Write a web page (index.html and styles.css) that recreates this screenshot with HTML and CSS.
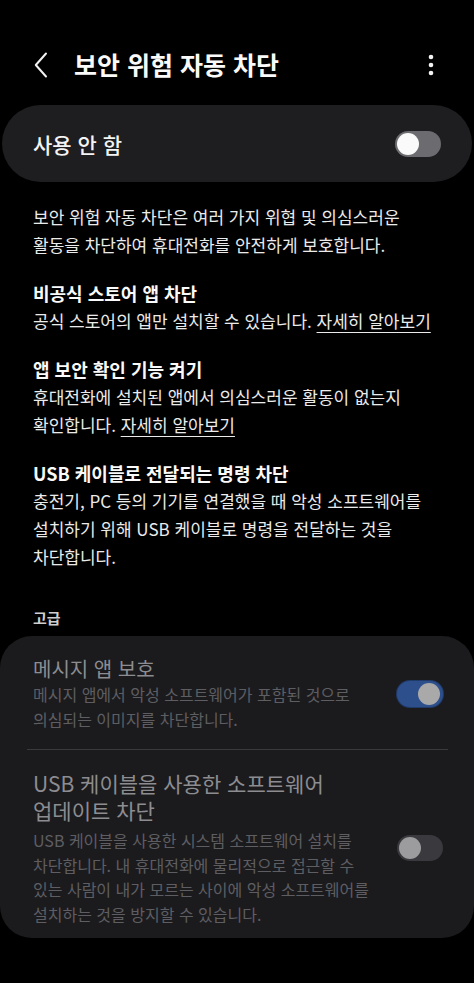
FILE: index.html
```html
<!DOCTYPE html>
<html lang="ko">
<head>
    <meta charset="UTF-8">
    <meta name="viewport" content="width=device-width, initial-scale=1.0">
    <title>보안 위험 자동 차단</title>
    <link rel="stylesheet" href="styles.css">
</head>
<body>
    <div class="screen">
        <header class="app-bar">
            <svg class="back" width="14" height="26" viewBox="0 0 14 26">
                <path d="M12 1.5 L1.8 13 L12 24.5" fill="none" stroke="#f2f2f2" stroke-width="2" stroke-linecap="round" stroke-linejoin="round"/>
            </svg>
            <h1>보안 위험 자동 차단</h1>
            <svg class="more" width="6" height="22" viewBox="0 0 6 22">
                <circle cx="3" cy="3" r="2.3" fill="#f2f2f2"/>
                <circle cx="3" cy="11" r="2.3" fill="#f2f2f2"/>
                <circle cx="3" cy="19" r="2.3" fill="#f2f2f2"/>
            </svg>
        </header>

        <div class="master-switch">
            <span>사용 안 함</span>
            <div class="switch"><div class="knob"></div></div>
        </div>

        <div class="info">
            <p class="lead">보안 위험 자동 차단은 여러 가지 위협 및 의심스러운<br>활동을 차단하여 휴대전화를 안전하게 보호합니다.</p>

            <div class="block">
                <h2>비공식 스토어 앱 차단</h2>
                <p>공식 스토어의 앱만 설치할 수 있습니다. <a href="#">자세히 알아보기</a></p>
            </div>

            <div class="block">
                <h2>앱 보안 확인 기능 켜기</h2>
                <p>휴대전화에 설치된 앱에서 의심스러운 활동이 없는지<br>확인합니다. <a href="#">자세히 알아보기</a></p>
            </div>

            <div class="block">
                <h2>USB 케이블로 전달되는 명령 차단</h2>
                <p>충전기, PC 등의 기기를 연결했을 때 악성 소프트웨어를<br>설치하기 위해 USB 케이블로 명령을 전달하는 것을<br>차단합니다.</p>
            </div>
        </div>

        <div class="section-title">고급</div>

        <div class="card">
            <div class="row">
                <div class="row-text">
                    <div class="row-title">메시지 앱 보호</div>
                    <div class="row-sub">메시지 앱에서 악성 소프트웨어가 포함된 것으로<br>의심되는 이미지를 차단합니다.</div>
                </div>
                <div class="switch on"><div class="knob"></div></div>
            </div>
            <div class="divider"></div>
            <div class="row last">
                <div class="row-text">
                    <div class="row-title">USB 케이블을 사용한 소프트웨어<br>업데이트 차단</div>
                    <div class="row-sub">USB 케이블을 사용한 시스템 소프트웨어 설치를<br>차단합니다. 내 휴대전화에 물리적으로 접근할 수<br>있는 사람이 내가 모르는 사이에 악성 소프트웨어를<br>설치하는 것을 방지할 수 있습니다.</div>
                </div>
                <div class="switch dim"><div class="knob"></div></div>
            </div>
        </div>
    </div>
</body>
</html>
```

FILE: styles.css
```css
body {
    margin: 0;
    background: #000;
    font-family: "Noto Sans CJK KR", "Noto Sans", sans-serif;
    color: #f2f2f2;
}
.screen {
    width: 474px;
    min-height: 983px;
    padding-bottom: 20px;
}
.app-bar {
    display: flex;
    align-items: center;
    height: 32px;
    padding: 48px 0 0 34px;
}
.back {
    margin-top: 1px;
}
.app-bar h1 {
    flex: 1;
    margin: 0 0 0 26px;
    font-size: 25px;
    font-weight: 700;
    line-height: 32px;
    color: #fafafa;
}
.more {
    margin-right: 40px;
    margin-top: 2px;
}
.master-switch {
    display: flex;
    align-items: center;
    justify-content: space-between;
    height: 77px;
    margin: 25px 2px 0 2px;
    padding: 0 31px 0 31px;
    background: #1e1e21;
    border-radius: 39px;
}
.master-switch span {
    font-size: 21px;
    font-weight: 500;
    color: #f4f4f4;
}
.switch {
    position: relative;
    width: 46px;
    height: 26px;
    border-radius: 13px;
    background: #6c6b70;
    flex-shrink: 0;
}
.knob {
    position: absolute;
    left: 2px;
    top: 2px;
    width: 22px;
    height: 22px;
    border-radius: 50%;
    background: #fafafa;
}
.switch.on {
    background: #2d4f8c;
    box-shadow: 0 0 0 1px #203a6a;
}
.switch.on .knob {
    left: auto;
    right: 3px;
    background: #a9a9a9;
}
.switch.dim {
    background: #3a3a3e;
}
.switch.dim .knob {
    background: #9c9c9e;
}
.info {
    padding: 21px 33px 0 33px;
}
.info p {
    margin: 0;
    font-size: 17px;
    line-height: 28px;
    color: #ebebeb;
    white-space: nowrap;
}
.info a {
    color: #ebebeb;
    text-decoration: underline;
    text-underline-offset: 4px;
}
.block {
    margin-top: 20px;
}
.block h2 {
    margin: 0;
    font-size: 18px;
    font-weight: 700;
    line-height: 28px;
    color: #fafafa;
}
.section-title {
    margin: 37px 0 0 33px;
    font-size: 15px;
    font-weight: 700;
    line-height: 20px;
    color: #cfcfcf;
}
.card {
    margin: 8px 0 0 0;
    background: #1b1b1e;
    border-radius: 32px;
    padding: 20px 0 12px 0;
}
.row {
    display: flex;
    align-items: center;
    justify-content: space-between;
    padding: 0 31px 0 33px;
}
.row-text {
    white-space: nowrap;
}
.row-title {
    font-size: 20px;
    line-height: 26px;
    color: #8d8d91;
}
.last .row-title {
    font-size: 21px;
    line-height: 27px;
}
.row-sub {
    font-size: 16px;
    line-height: 24.5px;
    color: #5e5e62;
}
.last .row-sub {
    margin-top: 4px;
}
.divider {
    height: 1px;
    margin: 18px 26px 20px 27px;
    background: #3a3a3e;
}
```
